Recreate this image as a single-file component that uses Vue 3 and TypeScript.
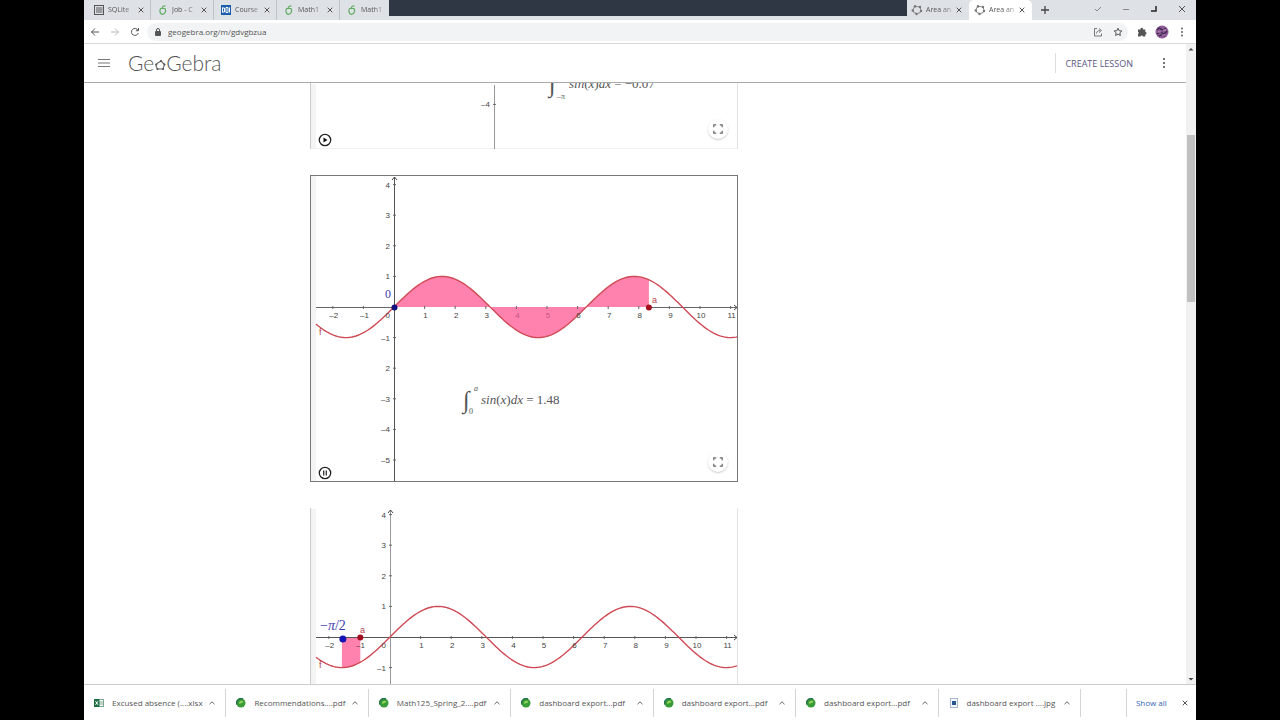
<script setup lang="ts">
interface Tab { title: string; icon: 'list' | 'leaf' | 'box' | 'geo'; close: boolean }
interface Download { name: string; icon: 'xls' | 'pdf' | 'jpg' }
interface Label { value: number; text: string }
interface Graph {
  id: string
  height: number
  originX: number
  originY: number
  active: boolean
  playing: boolean | null
  from: number | null
  to: number
  xLabels: number[]
  yLabels: Label[]
}

const UNIT = 30.6
const LEFT = 6
const RIGHT = 427

const tabs: Tab[] = [
  { title: 'SQLite', icon: 'list', close: true },
  { title: 'Job - C', icon: 'leaf', close: true },
  { title: 'Course', icon: 'box', close: true },
  { title: 'Math1', icon: 'leaf', close: true },
  { title: 'Math1', icon: 'leaf', close: false },
]

const downloads: Download[] = [
  { name: 'Excused absence (....xlsx', icon: 'xls' },
  { name: 'Recommendations....pdf', icon: 'pdf' },
  { name: 'Math125_Spring_2....pdf', icon: 'pdf' },
  { name: 'dashboard export...pdf', icon: 'pdf' },
  { name: 'dashboard export...pdf', icon: 'pdf' },
  { name: 'dashboard export...pdf', icon: 'pdf' },
  { name: 'dashboard export ....jpg', icon: 'jpg' },
]

const xs = [-2, -1, 1, 2, 3, 4, 5, 6, 7, 8, 9, 10, 11]
const positive: Label[] = [4, 3, 2, 1].map((v) => ({ value: v, text: String(v) }))

const graphs: Graph[] = [
  { id: 'first', height: 66, originX: 184, originY: -101, active: false, playing: false, from: null, to: 0, xLabels: [], yLabels: [{ value: -4, text: '–4' }] },
  {
    id: 'second', height: 307, originX: 84, originY: 132, active: true, playing: true, from: 0, to: 8.33, xLabels: xs,
    yLabels: [...positive, { value: -1, text: '–1' }, { value: -2, text: '2' }, { value: -3, text: '–3' }, { value: -4, text: '–4' }, { value: -5, text: '–5' }],
  },
  { id: 'third', height: 307, originX: 80, originY: 129, active: false, playing: null, from: -Math.PI / 2, to: -0.97, xLabels: xs, yLabels: [...positive, { value: -1, text: '–1' }] },
]

const px = (g: Graph, x: number): number => g.originX + x * UNIT
const py = (g: Graph, y: number): number => g.originY - y * UNIT

function points(g: Graph, start: number, end: number): string {
  const out: string[] = []
  for (let p = start; p < end; p += 2) out.push(`${p.toFixed(1)} ${py(g, Math.sin((p - g.originX) / UNIT)).toFixed(2)}`)
  out.push(`${end.toFixed(1)} ${py(g, Math.sin((end - g.originX) / UNIT)).toFixed(2)}`)
  return out.join(' L')
}
const curve = (g: Graph): string => 'M' + points(g, LEFT, RIGHT)
function area(g: Graph): string {
  const a = px(g, g.from ?? 0)
  const b = px(g, g.to)
  return `M${a} ${g.originY} L${points(g, a, b)} L${b} ${g.originY} Z`
}
</script>

<template>
  <div class="frame">
    <div class="tabstrip">
      <div class="tabs" role="tablist">
        <div v-for="(t, i) in tabs" :key="i" class="tab" :class="{ last: !t.close }" role="tab">
          <svg class="fav" viewBox="0 0 10 10" aria-hidden="true">
            <g v-if="t.icon === 'list'" fill="none" stroke="#555" stroke-width="1">
              <rect x=".5" y=".5" width="9" height="9" /><path d="M2 3h6.500M2 5h6.500M2 7h6.500" />
            </g>
            <g v-else-if="t.icon === 'leaf'" fill="none" stroke="#62ac62" stroke-width="1.200">
              <path d="M2.500 3.500h4.500c1.500 3-.3 5.800-2.500 5.800S1.300 6.500 2.500 3.500M4 3.200C4.500 1.500 6 .8 7.500 1" />
            </g>
            <g v-else>
              <rect width="10" height="10" fill="#1b5cab" /><path d="M1.500 2.500v5M1.500 3h2v4h-2M5 2.500v5h2v-5zM8.500 2.500v5" stroke="#fff" fill="none" />
            </g>
          </svg>
          <span class="tab-title">{{ t.title }}</span>
          <button v-if="t.close" class="x" aria-label="Close tab"><svg viewBox="0 0 6 6"><path d="M.7.7l4.600 4.600M5.300.7L.7 5.300" /></svg></button>
        </div>
      </div>
      <div class="overlay"></div>
      <div class="tabs right" role="tablist">
        <div v-for="n in 2" :key="n" class="tab" :class="{ current: n === 2 }" role="tab">
          <svg class="geo" viewBox="0 0 12 12" aria-hidden="true">
            <ellipse cx="6" cy="6" rx="4" ry="3.600" fill="none" stroke="#888" />
            <g fill="#777"><circle cx="4" cy="2.300" r="1.200" /><circle cx="9" cy="3" r="1.200" /><circle cx="10" cy="7" r="1.200" /><circle cx="5.500" cy="10" r="1.200" /><circle cx="1.800" cy="6.500" r="1.200" /></g>
          </svg>
          <span class="tab-title">Area an</span>
          <button class="x" aria-label="Close tab"><svg viewBox="0 0 6 6"><path d="M.7.7l4.600 4.600M5.300.7L.7 5.300" /></svg></button>
        </div>
      </div>
      <button class="plus" aria-label="New tab"><svg viewBox="0 0 8 8"><path d="M4 0v8M0 4h8" stroke="#444" stroke-width="1.300" /></svg></button>
      <div class="window">
        <button aria-label="Search tabs"><svg viewBox="0 0 8 8"><path d="M1 4l2 2 4-4" stroke="#888" fill="none" /></svg></button>
        <button aria-label="Minimize"><svg viewBox="0 0 8 8"><path d="M1 4.500h6" stroke="#888" /></svg></button>
        <button aria-label="Restore"><svg viewBox="0 0 8 8"><path d="M6 1v5H1" stroke="#222" stroke-width="1.500" fill="none" /></svg></button>
        <button aria-label="Close"><svg viewBox="0 0 8 8"><path d="M1 1l6 6M7 1L1 7" stroke="#555" fill="none" /></svg></button>
      </div>
    </div>

    <div class="toolbar">
      <button aria-label="Back"><svg viewBox="0 0 10 10"><path d="M9 5H1.500M5 1.500L1.500 5 5 8.500" stroke="#555" fill="none" /></svg></button>
      <button aria-label="Forward"><svg viewBox="0 0 10 10"><path d="M1 5h7.500M5 1.500L8.500 5 5 8.500" stroke="#bbb" fill="none" /></svg></button>
      <button aria-label="Reload"><svg viewBox="0 0 10 10"><path d="M8 3.200A3.500 3.500 0 1 0 8.300 6M8.500 1v2.700H5.800" stroke="#555" fill="none" /></svg></button>
      <div class="omnibox">
        <svg class="lock" viewBox="0 0 6 8" aria-hidden="true"><rect y="3" width="6" height="5" rx="1" fill="#555" /><path d="M1.500 3.500V2a1.500 1.500 0 0 1 3 0v1.500" stroke="#555" fill="none" /></svg>
        <input class="url" type="text" aria-label="Address" value="geogebra.org/m/gdvgbzua" />
        <button aria-label="Share"><svg viewBox="0 0 10 10"><path d="M4 1.500H1.500v7.500h7V6.500M3.500 6.500C3.500 4.500 5 3.500 7 3.500M6 1.500l2.500 2-2.500 2" stroke="#777" fill="none" /></svg></button>
        <button class="star" aria-label="Bookmark"><svg viewBox="0 0 10 10"><path d="M5 1.200l1.100 2.500 2.800.3-2.100 1.800.6 2.700L5 7.100 2.600 8.500l.6-2.700L1.100 4l2.800-.3z" stroke="#555" fill="none" /></svg></button>
      </div>
      <div class="actions">
        <button aria-label="Extensions"><svg viewBox="0 0 10 10"><path d="M1 2.500h2.500a1.300 1.300 0 1 1 2.500 0h2.300V5a1.200 1.200 0 1 1 0 2.400V9.500H6a1.300 1.300 0 0 0-2.500 0H1V7a1.300 1.300 0 0 0 0-2.300z" fill="#555" /></svg></button>
        <button class="avatar" aria-label="Profile"><svg viewBox="0 0 14 14"><circle cx="7" cy="7" r="6.500" fill="#8e5a96" /><path d="M2 5q2-3 4-1t5-1M2 9q3-3 5-1t5-2M4 11q3-2 6 0" stroke="#422a55" stroke-width="1.400" fill="none" /><path d="M3 7h3M8 5h3M7 10h3" stroke="#d09cc5" /></svg></button>
        <button aria-label="Menu"><svg viewBox="0 0 10 10" fill="#555"><circle cx="5" cy="1.500" r=".9" /><circle cx="5" cy="5" r=".9" /><circle cx="5" cy="8.500" r=".9" /></svg></button>
      </div>
    </div>

    <div class="viewport">
      <div class="page">
        <header class="header">
          <button class="burger" aria-label="Open menu"><svg viewBox="0 0 12 10"><path d="M0 1.500h12M0 5h12M0 8.500h12" stroke="#777" /></svg></button>
          <a class="logo" href="#" aria-label="GeoGebra">Ge<svg viewBox="0 0 12 12" aria-hidden="true"><path d="M3 4.500L7 2l3.500 3.500L9 10H3.500L2 7z" fill="none" stroke="#666" stroke-width="1.100" /><g fill="#555"><circle cx="7" cy="2" r="1.100" /><circle cx="10.500" cy="5.500" r="1.100" /><circle cx="9" cy="10" r="1.100" /><circle cx="3.500" cy="10" r="1.100" /><circle cx="2.200" cy="5.500" r="1.100" /></g></svg>Gebra</a>
          <button class="lesson">CREATE LESSON</button>
          <button class="more" aria-label="More"><svg viewBox="0 0 4 12" fill="#555"><circle cx="2" cy="2" r="1.100" /><circle cx="2" cy="6" r="1.100" /><circle cx="2" cy="10" r="1.100" /></svg></button>
        </header>
        <main class="content">
          <section v-for="g in graphs" :key="g.id" class="card" :class="[g.id, { active: g.active }]">
            <svg class="plot" width="428" :height="g.height" :viewBox="`0 0 428 ${g.height}`">
              <rect x="1" y="1" width="5" :height="g.height - 2" fill="#f4f4f4" />
              <path v-if="g.from !== null" :d="area(g)" fill="#ff82ae" />
              <path :d="`M${g.originX + 0.5} 2V${g.height}`" :stroke="g.active ? '#555' : '#999'" />
              <template v-if="g.from !== null">
                <path :d="`M${g.originX - 2} 5l2.500 -3 2.500 3`" stroke="#444" fill="none" />
                <path v-if="g.active" :d="`M${LEFT} ${g.originY + 0.5}H${g.originX}M${px(g, g.to)} ${g.originY + 0.5}H${RIGHT}`" stroke="#666" />
                <path v-else :d="`M${LEFT} ${g.originY + 0.5}H${RIGHT}`" stroke="#555" />
                <path :d="`M${RIGHT - 3} ${g.originY - 2}l3 2.500 -3 2.500`" stroke="#444" fill="none" />
                <path :d="curve(g)" stroke="#cf4a55" stroke-width="1.400" fill="none" />
              </template>
              <g class="tick">
                <template v-for="x in g.xLabels" :key="x">
                  <path :d="`M${px(g, x)} ${g.originY - 1}v3`" stroke="#666" />
                  <text :x="px(g, x) + 1" :y="g.originY + 11" text-anchor="middle" :class="{ faint: g.active && (x === 4 || x === 5) }">{{ x < 0 ? '–' + -x : x }}</text>
                </template>
                <text v-if="g.xLabels.length" :x="g.originX - 4" :y="g.originY + 11" text-anchor="end">0</text>
                <template v-for="y in g.yLabels" :key="y.value">
                  <path :d="`M${g.originX - 1} ${py(g, y.value)}h3`" stroke="#666" />
                  <text :x="g.originX - 4" :y="py(g, y.value) + 3" text-anchor="end">{{ y.text }}</text>
                </template>
              </g>

              <g v-if="g.id === 'first'" class="math">
                <text x="239" y="9" class="integral">∫</text>
                <text x="247" y="16" class="bound">–π</text>
                <text x="259" y="5"><tspan class="it">sin</tspan>(<tspan class="it">x</tspan>)<tspan class="it">dx</tspan> = −0.07</text>
              </g>
              <g v-if="g.id === 'second'">
                <g class="math">
                  <text x="153" y="233" class="integral">∫</text>
                  <text x="164" y="216" class="bound it">a</text>
                  <text x="159" y="239" class="bound">0</text>
                  <text x="171" y="229"><tspan class="it">sin</tspan>(<tspan class="it">x</tspan>)<tspan class="it">dx</tspan> = 1.48</text>
                </g>
                <text x="9" y="160" class="fn">f</text>
                <text x="75" y="123" class="blue">0</text>
                <text x="342" y="128" class="fn">a</text>
                <circle cx="84.500" cy="132.500" r="3" fill="#10107c" />
                <circle :cx="px(g, g.to)" cy="132.500" r="3" fill="#a50d20" />
              </g>
              <g v-if="g.id === 'third'">
                <text x="9" y="160" class="fn">f</text>
                <text x="10" y="122" class="blue pi">−<tspan class="it">π</tspan>/2</text>
                <text x="50" y="125" class="fn">a</text>
                <circle :cx="px(g, -1.54)" cy="131" r="3.500" fill="#1414b4" />
                <circle :cx="px(g, g.to)" cy="129.500" r="3" fill="#a50d20" />
              </g>
            </svg>
            <button v-if="g.playing !== null" class="play" :aria-label="g.playing ? 'Pause' : 'Play'">
              <svg viewBox="0 0 14 14"><circle cx="7" cy="7" r="5.700" fill="#fff" stroke="#222" stroke-width="1.300" /><path v-if="g.playing" d="M5.700 4.500v5M8.300 4.500v5" stroke="#333" stroke-width="1.300" /><path v-else d="M5.500 4.500l4 2.500-4 2.500z" fill="#111" /></svg>
            </button>
            <button v-if="g.playing !== null" class="full" aria-label="Fullscreen">
              <svg viewBox="0 0 10 10"><path d="M.8 3.200V.8h2.400M6.800.8h2.400v2.400M9.200 6.800v2.400H6.800M3.200 9.200H.8V6.800" stroke="#666" stroke-width="1.200" fill="none" /></svg>
            </button>
          </section>
        </main>
      </div>
      <div class="scrollbar" aria-hidden="true">
        <svg viewBox="0 0 10 10"><path d="M2.500 6.500L5 4l2.500 2.500z" fill="#444" /></svg>
        <div class="before"></div><div class="thumb"></div><div class="after"></div>
        <svg viewBox="0 0 10 10"><path d="M2.500 4L5 6.500 7.500 4z" fill="#444" /></svg>
      </div>
    </div>

    <footer class="downloads">
      <div v-for="(d, i) in downloads" :key="i" class="download">
        <svg class="dl-icon" viewBox="0 0 10 10" aria-hidden="true">
          <g v-if="d.icon === 'xls'"><rect x="4.500" y="1.500" width="5" height="7" fill="#fff" stroke="#7ba58e" /><path d="M5 4h4M5 6h4" stroke="#7ba58e" /><rect y="1" width="5.500" height="8" fill="#1d7044" /><path d="M1.500 3.200l2.500 3.600M4 3.200L1.500 6.800" stroke="#fff" /></g>
          <g v-else-if="d.icon === 'pdf'"><circle cx="5" cy="5" r="4.500" fill="#3a9c38" /><path d="M.8 6.500A4.500 4.500 0 0 1 7 1" stroke="#24734c" stroke-width="1.500" fill="none" /><path d="M3.500 5.500q1-2.500 3.500-1.500" stroke="#95d65b" stroke-width="1.800" fill="none" /></g>
          <g v-else><rect x="1.500" y=".5" width="7" height="9" fill="#f5f8fc" stroke="#a8b9cf" /><rect x="3" y="3" width="4" height="4" fill="#27568e" /></g>
        </svg>
        <a class="dl-name" href="#">{{ d.name }}</a>
        <button class="chev" aria-label="Download options"><svg viewBox="0 0 8 8"><path d="M1.500 5.200L4 2.800l2.500 2.400" stroke="#666" fill="none" /></svg></button>
      </div>
      <div class="tail">
        <a class="show" href="#">Show all</a>
        <button class="x" aria-label="Close downloads"><svg viewBox="0 0 6 6"><path d="M.7.7l4.600 4.600M5.300.7L.7 5.300" /></svg></button>
      </div>
    </footer>
  </div>
</template>

<style>
body { margin: 0; background: #000; }
</style>

<style scoped>
.frame {
  display: flex;
  flex-direction: column;
  height: 100vh;
  margin: 0 84px;
  background: #fff;
  overflow: hidden;
  font-family: "Open Sans", "Noto Sans", sans-serif;
  font-size: 8px;
  color: #555;
}
button { display: flex; align-items: center; justify-content: center; flex: none; margin: 0; padding: 0; border: 0; background: none; font: inherit; color: inherit; }
svg { display: block; flex: none; }
a { color: inherit; text-decoration: none; }

.tabstrip { display: flex; flex: none; height: 20px; background: #dee1e6; }
.tabs { display: flex; flex: none; }
.tab { display: flex; align-items: center; box-sizing: border-box; width: 63px; padding: 0 6px 0 7px; border-right: 1px solid #c0c3c9; }
.tab:first-child { width: 67px; padding-left: 10px; }
.tab.last { width: 49px; padding-right: 2px; border-right: 0; }
.fav { width: 10px; height: 10px; }
.tab-title { flex: 1; min-width: 0; margin: 0 2px 0 4px; white-space: nowrap; font-size: 7px; line-height: 12px; mask-image: linear-gradient(90deg, #000 50%, #0004); }
.x { width: 6px; height: 6px; }
.x svg { width: 6px; height: 6px; stroke: #555; stroke-width: 1; fill: none; }
.overlay { flex: 1; height: 16px; background: #2f3644; }
.right .tab, .right .tab:first-child { width: 62px; padding: 0 7px 0 4px; border: 0; }
.right .tab.current { width: 63px; padding-left: 5px; border-radius: 5px 5px 0 0; background: #fff; }
.right .tab-title { margin-left: 3px; }
.geo { width: 12px; height: 12px; }
.plus { width: 26px; }
.plus svg { width: 8px; height: 8px; }
.window { display: flex; flex: none; align-items: center; height: 18px; margin-left: 26px; }
.window button { width: 28px; height: 18px; }
.window svg { width: 8px; height: 8px; }

.toolbar { display: flex; flex: none; align-items: center; box-sizing: border-box; height: 24px; padding-left: 1px; border-bottom: 1px solid #d8dadd; }
.toolbar button { width: 20px; height: 20px; }
.toolbar svg { width: 10px; height: 10px; }
.omnibox { display: flex; flex: 1; align-items: center; height: 18px; margin-left: 2px; padding-left: 8px; border-radius: 9px; background: #f1f3f4; }
.omnibox .lock { width: 6px; height: 8px; }
.url { flex: 1; min-width: 0; margin: 0 0 0 7px; padding: 0; border: 0; outline: 0; background: none; font: inherit; color: #555; }
.actions { display: flex; align-items: center; margin-left: 4px; padding-right: 4px; }
.toolbar .avatar svg { width: 14px; height: 14px; }

.viewport { display: flex; flex: 1; min-height: 0; }
.page { display: flex; flex: 1; flex-direction: column; min-width: 0; }
.header { display: flex; flex: none; align-items: center; box-sizing: border-box; height: 39px; padding: 0 20px 0 14px; border-bottom: 1px solid #aaa; }
.burger svg { width: 12px; height: 10px; }
.logo { display: flex; align-items: center; margin-left: 18px; margin-right: auto; font-family: Lato, sans-serif; font-size: 21px; font-weight: 300; line-height: 24px; color: #555; }
.logo svg { width: 12px; height: 12px; margin-top: 4px; }
.lesson { height: 20px; padding: 0 9px; border-left: 1px solid #ddd; font-size: 9px; color: #5c5680; }
.more { margin-left: 20px; }
.more svg { width: 4px; height: 12px; }
.content { display: grid; flex: 1; grid-template-columns: 226fr 428px 448fr; align-content: start; row-gap: 26px; min-height: 0; overflow: hidden; }
.card { position: relative; grid-column: 2; box-shadow: inset 1px 0 #ccc, inset -1px 0 #e2e2e2, inset 0 -1px #f0f0f0; }
.card.active { outline: 1px solid #777; outline-offset: -1px; }
.plot { width: 100%; height: auto; font-family: "Liberation Sans", Arial, sans-serif; }
.tick { font-size: 8px; fill: #444; }
.faint { fill: #c5557e; }
.math { font-family: "Liberation Serif", "Times New Roman", serif; font-size: 13px; fill: #555; }
.it { font-style: italic; }
.integral { font-size: 24px; font-style: italic; }
.bound { font-size: 8px; }
.fn { font-size: 9px; fill: #b8404c; }
.blue { font-family: "Liberation Serif", "Times New Roman", serif; font-size: 12px; fill: #3a3ab0; }
.pi { font-size: 14px; }
.play { position: absolute; left: 8px; bottom: 2px; width: 14px; height: 14px; }
.play svg { width: 14px; height: 14px; }
.full { position: absolute; right: 10px; bottom: 10px; width: 20px; height: 20px; border-radius: 50%; background: #fff; box-shadow: 0 1px 2px #ccc; }
.full svg { width: 10px; height: 10px; }

.scrollbar { display: flex; flex: none; flex-direction: column; align-items: center; width: 10px; background: #f1f1f1; }
.scrollbar svg { width: 10px; height: 10px; }
.before { flex: 81; }
.thumb { flex: 168; width: 8px; background: #c1c1c1; }
.after { flex: 374; }

.downloads { display: flex; flex: none; align-items: center; box-sizing: border-box; height: 36px; border-top: 1px solid #ccc; }
.download { display: flex; flex: 142; align-items: center; box-sizing: border-box; min-width: 0; height: 28px; padding: 0 9px 0 10px; border-right: 1px solid #d5d5d5; }
.dl-icon { width: 10px; height: 10px; }
.dl-name { flex: 1; margin-left: 8px; white-space: nowrap; font-size: 8px; }
.chev svg { width: 8px; height: 8px; }
.tail { display: flex; flex: none; align-items: center; justify-content: space-between; box-sizing: border-box; width: 70px; height: 28px; margin-left: 45px; padding: 0 8px 0 9px; border-left: 1px solid #d5d5d5; }
.show { font-size: 8px; color: #3564b4; white-space: nowrap; }
</style>
